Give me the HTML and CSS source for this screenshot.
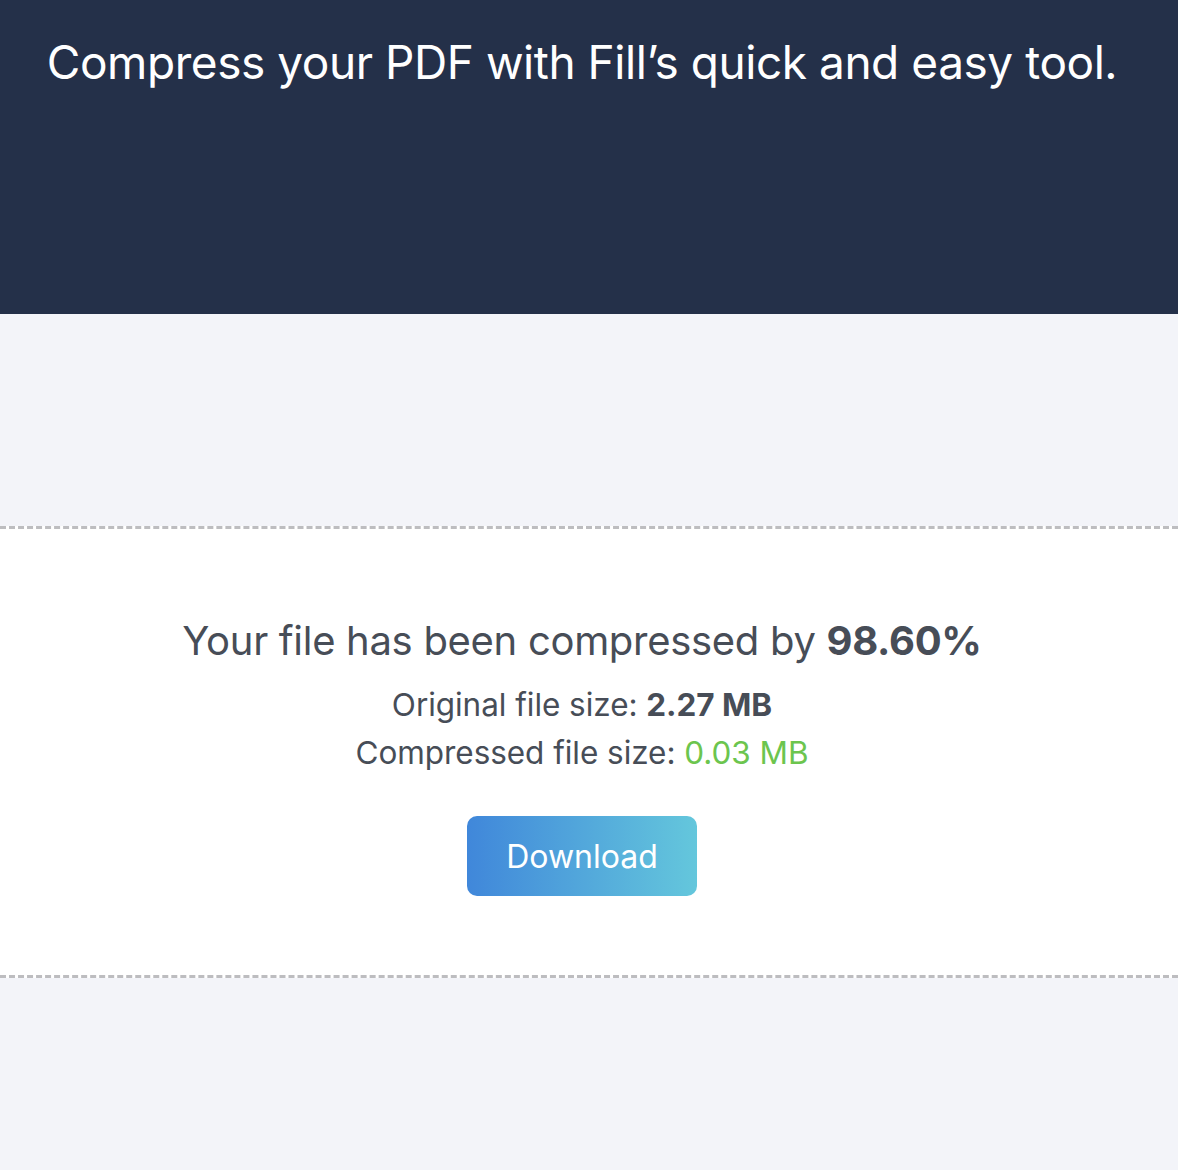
FILE: index.html
```html
<!DOCTYPE html>
<html>
<head>
<meta charset="utf-8">
<link rel="stylesheet" href="styles.css">
</head>
<body>
<header class="hero">
  <h1 class="hero-title">Compress your PDF with Fill’s quick and easy tool.</h1>
</header>
<main class="main">
  <section class="result">
    <h2 class="result-title">Your file has been compressed by <strong>98.60%</strong></h2>
    <p class="size size-first">Original file size: <strong>2.27 MB</strong></p>
    <p class="size">Compressed file size: <span class="green">0.03 MB</span></p>
    <button class="download">Download</button>
  </section>
</main>
</body>
</html>
```
FILE: styles.css
```css
html, body { margin: 0; padding: 0; }
body {
  font-family: Inter, "Noto Sans", sans-serif;
  background: #f3f4f9;
  min-height: 1170px;
}
.hero {
  background: #243049;
  height: 314px;
  box-sizing: border-box;
  padding: 34px 14px 0 0;
}
.hero-title {
  margin: 0;
  color: #fff;
  font-weight: 400;
  font-size: 46px;
  line-height: 56px;
  letter-spacing: -0.45px;
  text-align: center;
}
.main {
  padding-top: 212px;
}
.result {
  background: #fff;
  border-top: 3px dashed #bdbdc0;
  border-bottom: 3px dashed #bdbdc0;
  height: 446px;
  display: flex;
  flex-direction: column;
  align-items: center;
  padding-right: 14px;
}
.result-title {
  margin: 88px 0 0;
  font-size: 40px;
  line-height: 48px;
  font-weight: 400;
  letter-spacing: -0.3px;
  color: #474d57;
}
.result-title strong { font-weight: 700; }
.size {
  margin: 0;
  font-size: 31.5px;
  line-height: 48px;
  letter-spacing: -0.05px;
  color: #474d57;
}
.size-first { margin-top: 16px; }
.size strong { font-weight: 700; }
.green { color: #6cc54e; }
.download {
  margin-top: 39px;
  width: 230px;
  height: 80px;
  border: none;
  border-radius: 10px;
  background: linear-gradient(90deg, #4087da, #64c7dc);
  color: #fff;
  font-family: Inter, sans-serif;
  font-size: 32px;
  cursor: pointer;
}
```
